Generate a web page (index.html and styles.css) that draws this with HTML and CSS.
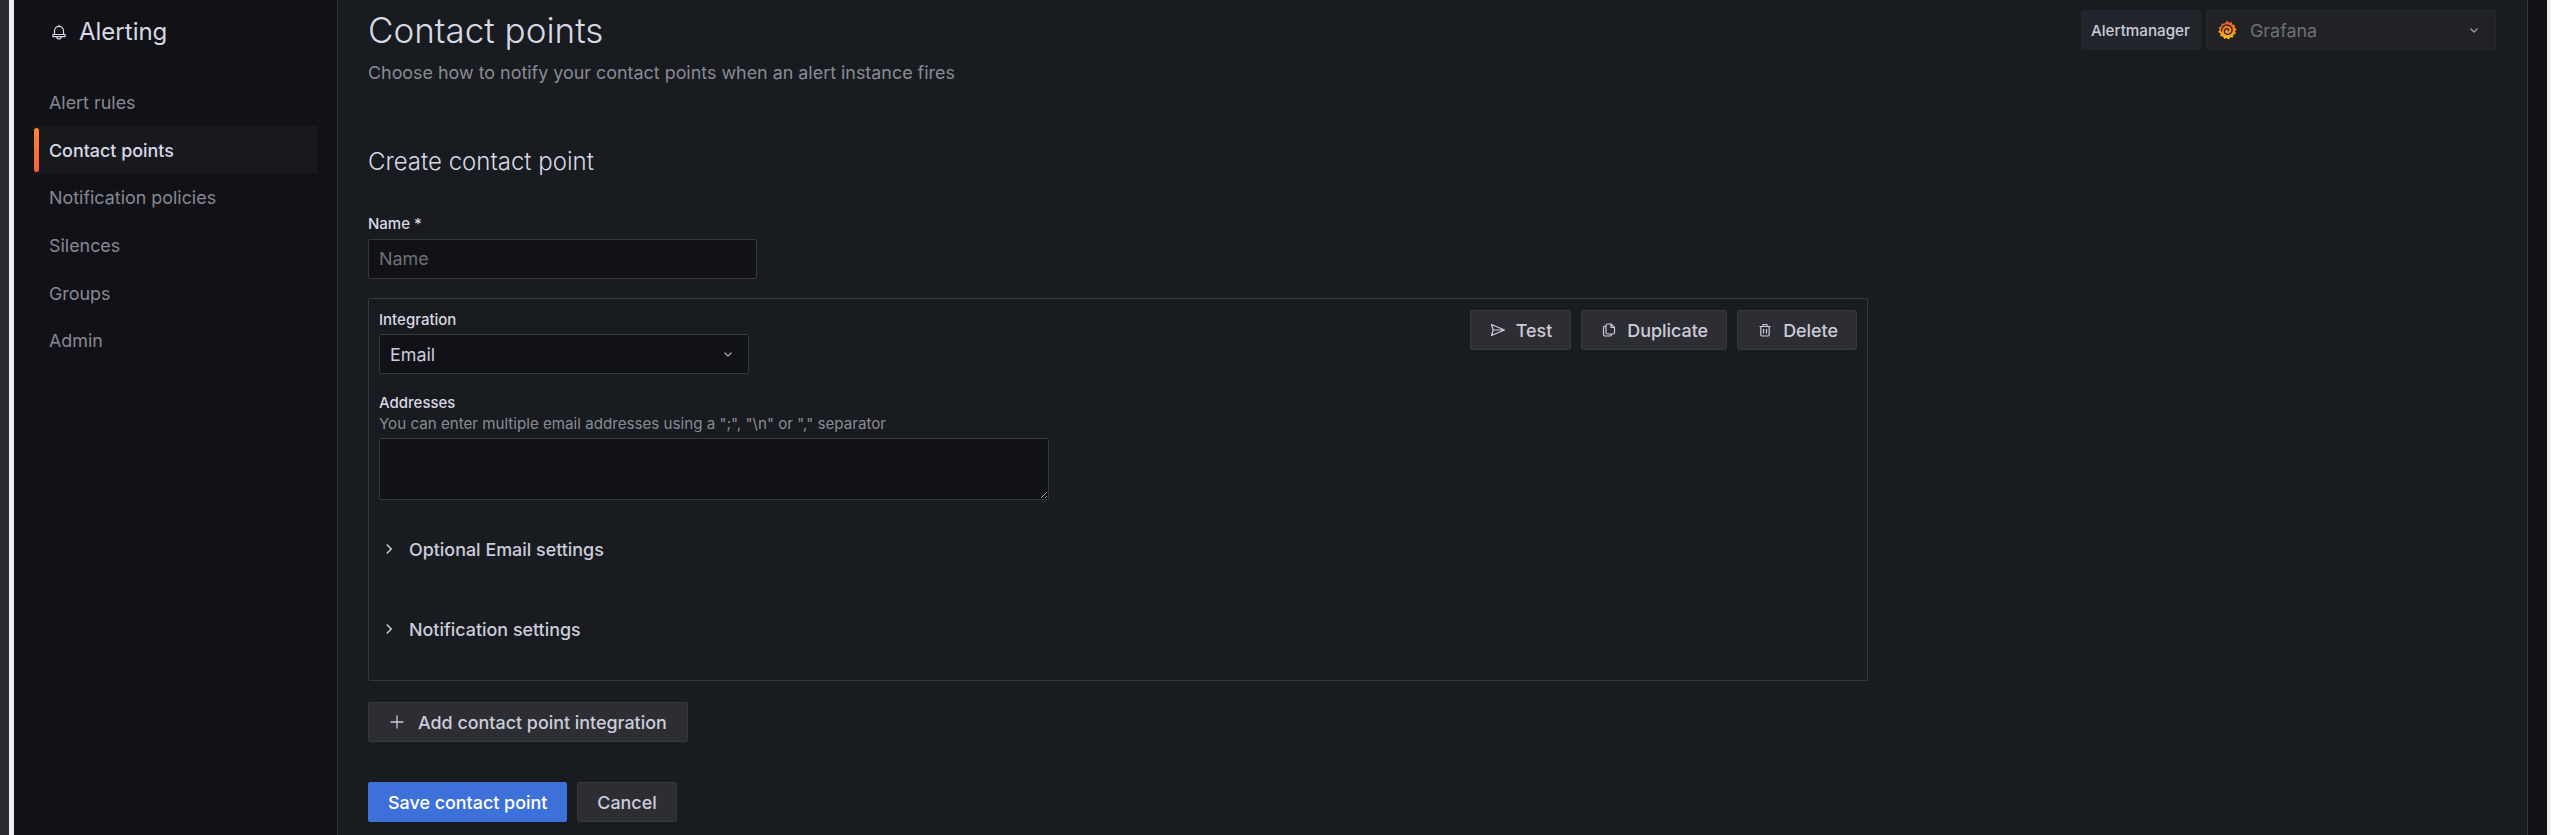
FILE: index.html
```html
<!DOCTYPE html>
<html lang="en">
<head>
    <meta charset="UTF-8">
    <title>Contact points</title>
    <link rel="stylesheet" href="styles.css">
</head>
<body>
    <div class="edge-dark"></div>
    <div class="edge-light"></div>

    <nav class="sidebar">
        <div class="sidebar-title">
            <svg class="bell" viewBox="0 0 16 16" fill="none" stroke="currentColor" stroke-width="1.2">
                <path d="M8 .8v1.500M3.500 10.500V6.800a4.500 4.500 0 0 1 9 0v3.700M2 10.500h12v2.200H2zM5.800 12.800a2.200 2.200 0 0 0 4.400 0"/>
            </svg>
            <span>Alerting</span>
        </div>
        <a class="nav-item">Alert rules</a>
        <a class="nav-item active">Contact points</a>
        <a class="nav-item">Notification policies</a>
        <a class="nav-item">Silences</a>
        <a class="nav-item">Groups</a>
        <a class="nav-item">Admin</a>
    </nav>

    <main class="main">
        <div class="page-head">
            <div>
                <h1>Contact points</h1>
                <p class="subtitle">Choose how to notify your contact points when an alert instance fires</p>
            </div>
            <div class="am-picker">
                <div class="am-label">Alertmanager</div>
                <div class="am-select">
                    <svg class="logo" viewBox="0 0 20 20">
                        <defs>
                            <linearGradient id="fire" x1="0" y1="0" x2="0" y2="1">
                                <stop offset="0" stop-color="#ef4f27"/>
                                <stop offset="1" stop-color="#fbc30f"/>
                            </linearGradient>
                        </defs>
                        <path fill="url(#fire)" d="M10.400 .6l1.500 2.200 2.700-1 .7 2.700 2.700 .3-.3 2.700 2.100 1.700-1.800 2 1 2.600-2.600 .9-.3 2.800-2.800-.2-1.500 2.300-2.200-1.700-2.500 1.200-1-2.700-2.800-.1.200-2.800-2.400-1.500 1.700-2.200-1-2.600 2.600-1 .1-2.800 2.800 .3z"/>
                        <path fill="none" stroke="#202226" stroke-width="1.300" stroke-linecap="round" d="M4.700 11a5.300 5.300 0 0 1 5.900-6 5 5 0 0 1 4.500 5.600 4.300 4.300 0 0 1-4.900 3.700 3.300 3.300 0 0 1-2.700-3.700 2.400 2.400 0 0 1 2.800-1.900 1.600 1.600 0 0 1 1.200 1.900"/>
                    </svg>
                    <span class="am-value">Grafana</span>
                    <svg class="chevron" viewBox="0 0 16 16" fill="none" stroke="currentColor" stroke-width="1.3"><path d="M4.500 6.500L8 10l3.500-3.500"/></svg>
                </div>
            </div>
        </div>

        <h2>Create contact point</h2>

        <label class="field-label name-label">Name *</label>
        <input class="text-input" type="text" placeholder="Name">

        <section class="integration">
            <div class="integration-top">
                <div>
                    <label class="field-label">Integration</label>
                    <div class="select">
                        <span>Email</span>
                        <svg class="chevron" viewBox="0 0 16 16" fill="none" stroke="currentColor" stroke-width="1.3"><path d="M4.500 6.500L8 10l3.500-3.500"/></svg>
                    </div>
                </div>
                <div class="integration-actions">
                    <button class="btn">
                        <svg viewBox="0 0 16 16" fill="none" stroke="currentColor" stroke-width="1.200" stroke-linejoin="round"><path d="M1.500 2.500L14.500 8l-13 5.500L3.200 8zM3.200 8h11.300"/></svg>
                        Test
                    </button>
                    <button class="btn">
                        <svg viewBox="0 0 16 16" fill="none" stroke="currentColor" stroke-width="1.200" stroke-linejoin="round"><path d="M4.500 4.200H4a1.500 1.500 0 0 0-1.500 1.500v6.800A1.500 1.500 0 0 0 4 14h5a1.500 1.500 0 0 0 1.500-1.500V12M5 3.500A1.500 1.500 0 0 1 6.500 2H10l3.500 3.500v5A1.500 1.500 0 0 1 12 12H6.500A1.500 1.500 0 0 1 5 10.500zM10 2v3.500h3.500"/></svg>
                        Duplicate
                    </button>
                    <button class="btn">
                        <svg viewBox="0 0 16 16" fill="none" stroke="currentColor" stroke-width="1.200" stroke-linejoin="round"><path d="M2.500 4.500h11M6 4.500V2.500h4v2M3.800 4.500v8.300A1.200 1.200 0 0 0 5 14h6a1.200 1.200 0 0 0 1.200-1.200V4.500M6.500 7v4.500M9.500 7v4.500"/></svg>
                        Delete
                    </button>
                </div>
            </div>

            <label class="field-label addr-label">Addresses</label>
            <p class="field-hint">You can enter multiple email addresses using a ";", "\n" or "," separator</p>
            <textarea class="addresses"></textarea>

            <div class="collapse first">
                <svg class="chevron-right" viewBox="0 0 16 16" fill="none" stroke="currentColor" stroke-width="1.300"><path d="M6 4l4 4-4 4"/></svg>
                Optional Email settings
            </div>
            <div class="collapse">
                <svg class="chevron-right" viewBox="0 0 16 16" fill="none" stroke="currentColor" stroke-width="1.300"><path d="M6 4l4 4-4 4"/></svg>
                Notification settings
            </div>
        </section>

        <button class="btn add-btn">
            <svg viewBox="0 0 16 16" fill="none" stroke="currentColor" stroke-width="1.300"><path d="M8 1.500v13M1.500 8h13"/></svg>
            Add contact point integration
        </button>

        <div class="form-actions">
            <button class="btn primary">Save contact point</button>
            <button class="btn">Cancel</button>
        </div>
    </main>

    <div class="rail"></div>
    <div class="edge-light right"></div>
</body>
</html>
```

FILE: styles.css
```css
* { box-sizing: border-box; }

html, body { height: 100%; }

body {
    display: flex;
    margin: 0;
    overflow: hidden;
    background: #111217;
    color: #ccccdc;
    font-family: Inter, "Noto Sans", sans-serif;
    font-size: 17.900px;
}

.edge-dark { width: 9px; flex: none; background: #2a2b2f; }
.edge-light { width: 5px; flex: none; background: #efefef; }

.sidebar {
    width: 324px;
    flex: none;
    padding: 0 20px;
    background: #111217;
    border-right: 1px solid #2c2e33;
}

.sidebar-title {
    display: flex;
    align-items: center;
    gap: 12px;
    height: 63px;
    margin-bottom: 15.500px;
    padding-left: 17px;
    color: #d8d9e4;
    font-size: 24px;
}

.bell { width: 16px; height: 16px; }

.nav-item {
    display: flex;
    align-items: center;
    height: 47.700px;
    padding-left: 15px;
    color: rgba(204, 204, 220, 0.65);
}

.nav-item.active {
    position: relative;
    background: #17191e;
    color: #d8d9e4;
    font-weight: 500;
}

.nav-item.active::before {
    content: "";
    position: absolute;
    left: 0;
    top: 2px;
    bottom: 2px;
    width: 5px;
    border-radius: 3px;
    background: linear-gradient(#ff8833, #f55f3e);
}

.main {
    width: 2189px;
    flex: none;
    padding: 0 31px 0 30px;
    background: #181b1f;
}

.page-head { display: flex; justify-content: space-between; }

h1 {
    margin: 11px 0 0;
    font-size: 35px;
    font-weight: 300;
    line-height: 38px;
    color: #d8d9e4;
}

.subtitle {
    margin: 12px 0 0;
    color: rgba(204, 204, 220, 0.65);
    line-height: 24px;
}

.am-picker { display: flex; gap: 5px; margin-top: 10px; }

.am-label {
    display: flex;
    align-items: center;
    width: 120px;
    height: 40px;
    padding-left: 10px;
    background: #22252b;
    border-radius: 2px;
    font-size: 15.200px;
    font-weight: 500;
}

.am-select {
    display: flex;
    align-items: center;
    width: 290px;
    height: 40px;
    padding: 0 13px 0 10px;
    background: #202226;
    border: 1px solid #25272c;
    border-radius: 2px;
}

.logo { width: 20px; height: 20px; flex: none; }
.am-value { margin-left: 13px; flex: 1; color: #6f7176; }

.chevron { width: 16px; height: 16px; color: #9a9ba6; flex: none; }

h2 {
    margin: 64px 0 0;
    font-size: 24px;
    font-weight: 300;
    line-height: 26px;
    color: #d8d9e4;
}

.field-label {
    display: block;
    height: 19px;
    font-size: 15px;
    font-weight: 500;
    line-height: 19px;
    color: #d8d9e4;
}

.name-label { margin-top: 39px; margin-bottom: 6px; }

.text-input {
    display: block;
    width: 389px;
    height: 40px;
    padding: 0 10px 2px;
    background: #111217;
    border: 1px solid #36383d;
    border-radius: 2px;
    color: #ccccdc;
    font: inherit;
}

.text-input::placeholder { color: #6f7176; opacity: 1; }

.integration {
    width: 1500px;
    height: 383px;
    margin-top: 19px;
    padding: 11px 10px 0;
    border: 1px solid #36383d;
    border-radius: 2px;
}

.integration-top { display: flex; justify-content: space-between; }

.integration-actions { display: flex; gap: 10px; }
.integration-actions .btn { padding: 0 18px 0 19px; }

.select {
    display: flex;
    align-items: center;
    justify-content: space-between;
    width: 370px;
    height: 40px;
    margin-top: 5px;
    padding: 0 12px 0 10px;
    background: #111217;
    border: 1px solid #36383d;
    border-radius: 2px;
}

.btn {
    display: inline-flex;
    align-items: center;
    gap: 10px;
    height: 40px;
    padding: 0 19px;
    background: #2c2e33;
    border: 1px solid #36383d;
    border-radius: 2px;
    color: #ccccdc;
    font-family: inherit;
    font-size: 17.900px;
    font-weight: 500;
}

.btn svg { width: 16px; height: 16px; flex: none; }

.addr-label { margin-top: 19px; }

.field-hint {
    margin: 2px 0 0;
    color: rgba(204, 204, 220, 0.65);
    font-size: 15.150px;
    line-height: 19px;
}

.addresses {
    display: block;
    width: 670px;
    height: 62px;
    margin-top: 5px;
    background: #111217;
    border: 1px solid #36383d;
    border-radius: 2px;
}

.collapse {
    display: flex;
    align-items: center;
    gap: 11px;
    height: 24px;
    margin-top: 56px;
    padding-left: 1px;
    font-weight: 500;
    color: #ccccdc;
}

.collapse.first { margin-top: 37px; }

.chevron-right { width: 18px; height: 18px; }

.add-btn { display: flex; gap: 13px; margin-top: 21px; padding: 0 20px; }

.form-actions { display: flex; gap: 10px; margin-top: 40px; }

.btn.primary {
    background: #3d71d9;
    border-color: #3d71d9;
    color: #fff;
}

.rail {
    width: 20px;
    flex: none;
    background: #111217;
    border-left: 1px solid #36383d;
}

.edge-light.right { width: 5px; }
```
